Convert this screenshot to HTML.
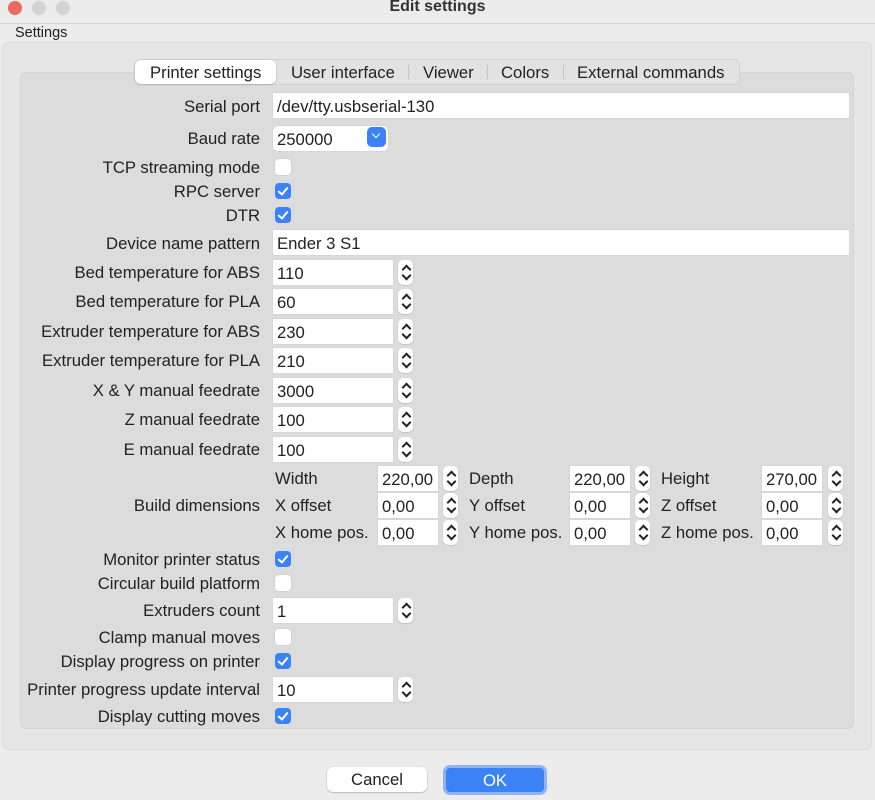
<!DOCTYPE html>
<html><head><meta charset="utf-8"><style>
*{box-sizing:border-box;margin:0;padding:0}
body{width:875px;height:800px;background:#ececec;font-family:"Liberation Sans",sans-serif;font-size:16.7px;color:#222;position:relative;overflow:hidden}
.a{position:absolute}
.lbl{position:absolute;right:615px;white-space:nowrap;line-height:20px;margin-top:1px}
.f{position:absolute;background:#fff;height:25px;padding-left:4px;line-height:27px;white-space:nowrap;box-shadow:0 0 0 0.5px #d0d0d0}
.cb{position:absolute;left:275px;width:16px;height:16px;border-radius:4px;background:#fff;box-shadow:0 0 0 0.5px #c8c8c8}
.cb.on{background:#3b82f6;box-shadow:none}
.cb.on::after{content:"";position:absolute;left:5px;top:2px;width:4px;height:8px;border:solid #fff;border-width:0 2.4px 2.4px 0;transform:rotate(40deg)}
.st{position:absolute;width:15px;height:25px;background:#fff;border-radius:5px;box-shadow:0 0.5px 1px #aaa}
.st::before,.st::after{content:"";position:absolute;left:4.5px;width:5px;height:5px;border:solid #222;border-width:2px 0 0 2px}
.st::before{top:6px;transform:rotate(45deg)}
.st::after{top:12px;transform:rotate(225deg)}
.bl{position:absolute;line-height:20px;white-space:nowrap;margin-top:1px}
</style></head><body>
<div class="a" style="left:0;top:0;width:875px;height:24px;border-bottom:1px solid #d6d6d6;background:#ececec"></div>
<div class="a" style="left:8px;top:1px;width:14px;height:14px;border-radius:50%;background:#ec6a5e"></div>
<div class="a" style="left:32px;top:1px;width:14px;height:14px;border-radius:50%;background:#d3d3d3"></div>
<div class="a" style="left:56px;top:1px;width:14px;height:14px;border-radius:50%;background:#d3d3d3"></div>
<div class="a" style="left:0;width:875px;top:-2px;text-align:center;font-weight:bold;font-size:16px;color:#333">Edit settings</div>
<div class="a" style="left:15px;top:25px;font-size:14.5px">Settings</div>
<div class="a" style="left:2px;top:42px;width:870px;height:708px;background:#e6e6e6;border-radius:6px;border:1px solid #dcdcdc"></div>
<div class="a" style="left:20px;top:72px;width:834px;height:657px;background:#dcdcdc;border-radius:6px;border:1px solid #d4d4d4"></div>
<div class="a" style="left:134px;top:59px;width:606px;height:26px;background:#e2e2e2;border-radius:7px;border:1px solid #d2d2d2"></div>
<div class="a" style="left:135px;top:60px;width:141px;height:24px;background:#fff;border-radius:6px;box-shadow:0 0.5px 1.5px #999"></div>
<div class="bl" style="left:150px;top:62px;">Printer settings</div>
<div class="bl" style="left:291px;top:62px;">User interface</div>
<div class="a" style="left:408px;top:65px;width:1px;height:14px;background:#c4c4c4"></div>
<div class="bl" style="left:423px;top:62px;">Viewer</div>
<div class="a" style="left:487px;top:65px;width:1px;height:14px;background:#c4c4c4"></div>
<div class="bl" style="left:501px;top:62px;">Colors</div>
<div class="a" style="left:563px;top:65px;width:1px;height:14px;background:#c4c4c4"></div>
<div class="bl" style="left:577px;top:62px;">External commands</div>

<div class="lbl" style="top:96px">Serial port</div>
<div class="f" style="left:273px;top:93px;width:576px">/dev/tty.usbserial-130</div>
<div class="lbl" style="top:128px">Baud rate</div>
<div class="f" style="left:273px;top:126px;width:115px;border-radius:5px">250000</div>
<div class="a" style="left:367px;top:127px;width:19px;height:20px;background:#3b82f6;border-radius:5px"></div>
<div class="a" style="left:373px;top:131px;width:6px;height:6px;border:solid #fff;border-width:0 1.8px 1.8px 0;transform:rotate(45deg)"></div>

<div class="lbl" style="top:157px">TCP streaming mode</div><div class="cb" style="top:159px"></div>
<div class="lbl" style="top:181px">RPC server</div><div class="cb on" style="top:183px"></div>
<div class="lbl" style="top:205px">DTR</div><div class="cb on" style="top:207px"></div>
<div class="lbl" style="top:233px">Device name pattern</div>
<div class="f" style="left:273px;top:230px;width:576px">Ender 3 S1</div>

<div class="lbl" style="top:262px">Bed temperature for ABS</div><div class="f" style="left:273px;top:260px;width:120px">110</div><div class="st" style="left:398px;top:260px"></div>
<div class="lbl" style="top:291px">Bed temperature for PLA</div><div class="f" style="left:273px;top:289px;width:120px">60</div><div class="st" style="left:398px;top:289px"></div>
<div class="lbl" style="top:321px">Extruder temperature for ABS</div><div class="f" style="left:273px;top:319px;width:120px">230</div><div class="st" style="left:398px;top:319px"></div>
<div class="lbl" style="top:350px">Extruder temperature for PLA</div><div class="f" style="left:273px;top:348px;width:120px">210</div><div class="st" style="left:398px;top:348px"></div>
<div class="lbl" style="top:380px">X &amp; Y manual feedrate</div><div class="f" style="left:273px;top:378px;width:120px">3000</div><div class="st" style="left:398px;top:378px"></div>
<div class="lbl" style="top:409px">Z manual feedrate</div><div class="f" style="left:273px;top:407px;width:120px">100</div><div class="st" style="left:398px;top:407px"></div>
<div class="lbl" style="top:439px">E manual feedrate</div><div class="f" style="left:273px;top:437px;width:120px">100</div><div class="st" style="left:398px;top:437px"></div>

<div class="lbl" style="top:495px">Build dimensions</div>
<div class="bl" style="left:275px;top:468px">Width</div><div class="f" style="left:378px;top:466px;width:60px">220,00</div><div class="st" style="left:443px;top:466px"></div>
<div class="bl" style="left:469px;top:468px">Depth</div><div class="f" style="left:570px;top:466px;width:60px">220,00</div><div class="st" style="left:635px;top:466px"></div>
<div class="bl" style="left:661px;top:468px">Height</div><div class="f" style="left:762px;top:466px;width:60px">270,00</div><div class="st" style="left:828px;top:466px"></div>
<div class="bl" style="left:275px;top:495px">X offset</div><div class="f" style="left:378px;top:493px;width:60px">0,00</div><div class="st" style="left:443px;top:493px"></div>
<div class="bl" style="left:469px;top:495px">Y offset</div><div class="f" style="left:570px;top:493px;width:60px">0,00</div><div class="st" style="left:635px;top:493px"></div>
<div class="bl" style="left:661px;top:495px">Z offset</div><div class="f" style="left:762px;top:493px;width:60px">0,00</div><div class="st" style="left:828px;top:493px"></div>
<div class="bl" style="left:275px;top:522px">X home pos.</div><div class="f" style="left:378px;top:520px;width:60px">0,00</div><div class="st" style="left:443px;top:520px"></div>
<div class="bl" style="left:469px;top:522px">Y home pos.</div><div class="f" style="left:570px;top:520px;width:60px">0,00</div><div class="st" style="left:635px;top:520px"></div>
<div class="bl" style="left:661px;top:522px">Z home pos.</div><div class="f" style="left:762px;top:520px;width:60px">0,00</div><div class="st" style="left:828px;top:520px"></div>

<div class="lbl" style="top:549px">Monitor printer status</div><div class="cb on" style="top:551px"></div>
<div class="lbl" style="top:573px">Circular build platform</div><div class="cb" style="top:575px"></div>
<div class="lbl" style="top:600px">Extruders count</div><div class="f" style="left:273px;top:598px;width:120px">1</div><div class="st" style="left:398px;top:598px"></div>
<div class="lbl" style="top:627px">Clamp manual moves</div><div class="cb" style="top:629px"></div>
<div class="lbl" style="top:651px">Display progress on printer</div><div class="cb on" style="top:653px"></div>
<div class="lbl" style="top:679px">Printer progress update interval</div><div class="f" style="left:273px;top:677px;width:120px">10</div><div class="st" style="left:398px;top:677px"></div>
<div class="lbl" style="top:706px">Display cutting moves</div><div class="cb on" style="top:708px"></div>

<div class="a" style="left:327px;top:767px;width:100px;height:25px;background:#fff;border-radius:6px;box-shadow:0 0.5px 1.5px #999;text-align:center;line-height:26px">Cancel</div>
<div class="a" style="left:443px;top:765px;width:104px;height:30px;background:#3b82f6;border-radius:7px;border:3px solid #8fb4f0;color:#fff;text-align:center;line-height:25px">OK</div>
</body></html>
